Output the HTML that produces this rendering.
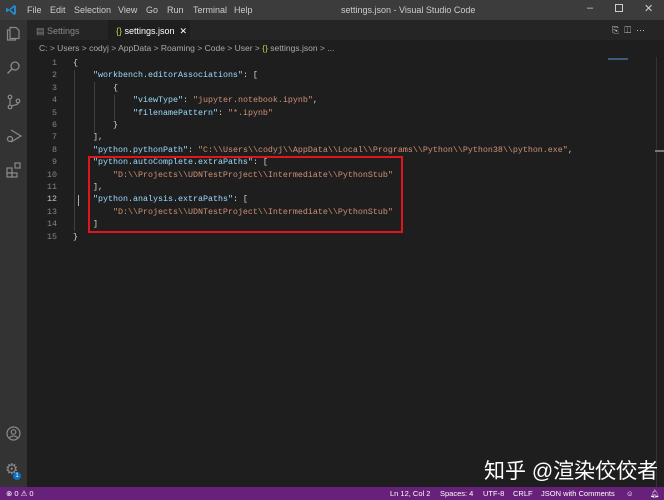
<!DOCTYPE html>
<html><head><meta charset="utf-8"><style>
*{margin:0;padding:0;box-sizing:border-box}
body{width:664px;height:500px;background:#1e1e1e;overflow:hidden;position:relative;font-family:"Liberation Sans",sans-serif;color:#ccc}
.abs{position:absolute}
#title{left:0;top:0;width:664px;height:20px;background:#3c3c3c;font-size:9px;color:#ccc}
#title span{position:absolute;top:5px}
#act{left:0;top:20px;width:27px;height:467px;background:#333}
#tabs{left:27px;top:20px;width:637px;height:20px;background:#252526}
#bc{left:27px;top:40px;width:637px;height:17px;background:#1e1e1e;font-size:8.5px;color:#a9a9a9}
#status{left:0;top:487px;width:664px;height:13px;background:#68217a;color:#fff;font-size:7.5px}
#status span{position:absolute;top:2px}
.code{font-family:"Liberation Mono",monospace;font-size:8.33px;line-height:12.4px;white-space:pre}
.k{color:#9cdcfe}.s{color:#ce9178}.p{color:#d4d4d4}
#nums{left:27px;top:57px;width:30px;text-align:right;color:#858585}
#lines{left:73px;top:57px}
.g{position:absolute;width:1px;background:#404040}
</style></head><body>
<div class="abs" id="title">
<svg class="abs" style="left:5px;top:4px" width="12" height="12" viewBox="0 0 12 12"><path d="M9 1L4 5.5 1.8 3.8 1 4.2v3.6l.8.4L4 6.5 9 11l2-1V2z" fill="#2489ca"/><path d="M9 3.5L5.5 6 9 8.5z" fill="#3c3c3c"/></svg>
<span style="left:27px">File</span><span style="left:50px">Edit</span><span style="left:74px">Selection</span><span style="left:118px">View</span><span style="left:146px">Go</span><span style="left:167px">Run</span><span style="left:193px">Terminal</span><span style="left:234px">Help</span>
<span style="left:341px">settings.json - Visual Studio Code</span>
<span style="left:587px;top:2px;font-size:11px">–</span>
<span style="left:615px;top:4px;width:8px;height:8px;border:1px solid #ccc"></span>
<span style="left:644px;top:2px;font-size:11px">✕</span>
</div>
<div class="abs" id="act">
<svg class="abs" style="left:6px;top:6px" width="15" height="15" viewBox="0 0 15 15" fill="none" stroke="#8a8a8a" stroke-width="1.2"><path d="M4 4V1.5h6l3 3v8H4z"/><path d="M4 4H1.5v10h8v-1.5"/></svg>
<svg class="abs" style="left:6px;top:40px" width="15" height="15" viewBox="0 0 15 15" fill="none" stroke="#8a8a8a" stroke-width="1.3"><circle cx="9" cy="6" r="4"/><path d="M6 9l-4.5 4.5"/></svg>
<svg class="abs" style="left:7px;top:74px" width="14" height="16" viewBox="0 0 14 16" fill="none" stroke="#8a8a8a" stroke-width="1.2"><circle cx="3" cy="3" r="1.8"/><circle cx="3" cy="13" r="1.8"/><circle cx="11" cy="7" r="1.8"/><path d="M3 5v6M11 9c0 2-4 2-7 3"/></svg>
<svg class="abs" style="left:6px;top:108px" width="16" height="16" viewBox="0 0 16 16" fill="none" stroke="#8a8a8a" stroke-width="1.2"><path d="M5 2l10 6-10 6"/><circle cx="4" cy="11" r="2.5"/></svg>
<svg class="abs" style="left:6px;top:142px" width="16" height="16" viewBox="0 0 16 16" fill="none" stroke="#8a8a8a" stroke-width="1.2"><rect x="1" y="6" width="5" height="5"/><rect x="1" y="11" width="5" height="4"/><rect x="6" y="11" width="5" height="4"/><rect x="9" y="1" width="5" height="5"/></svg>
<svg class="abs" style="left:6px;top:406px" width="15" height="15" viewBox="0 0 15 15" fill="none" stroke="#8a8a8a" stroke-width="1.2"><circle cx="7.5" cy="7.5" r="6.5"/><circle cx="7.5" cy="6" r="2.3"/><path d="M3.3 12.3c1.5-3 7-3 8.4 0"/></svg>
<div class="abs" style="left:5px;top:440px;font-size:15px;color:#8a8a8a">⚙</div>
<div class="abs" style="left:13px;top:452px;width:8px;height:8px;border-radius:4px;background:#0e70c0;color:#fff;font-size:6px;text-align:center;line-height:8px">1</div>
</div>
<div class="abs" id="tabs">
<div class="abs" style="left:9px;top:6px;font-size:9px;color:#8a8a8a">▤ Settings</div>
<div class="abs" style="left:81px;top:0;width:82px;height:20px;background:#1e1e1e;font-size:9px;color:#fff"><span style="position:absolute;left:8px;top:6px"><span style="color:#cbcb41">{}</span> settings.json&nbsp; ✕</span></div>
<div class="abs" style="left:585px;top:5px;font-size:9px;color:#ccc">⎘&nbsp; ◫&nbsp; ···</div>
</div>
<div class="abs" id="bc"><span style="position:absolute;left:12px;top:3px">C: &gt; Users &gt; codyj &gt; AppData &gt; Roaming &gt; Code &gt; User &gt; <span style="color:#cbcb41">{}</span> settings.json &gt; ...</span></div>
<div class="abs code" id="nums">1
2
3
4
5
6
7
8
9
10
11
<span style="color:#c6c6c6">12</span>
13
14
15</div>
<div class="g" style="left:74px;top:70px;height:161px"></div>
<div class="g" style="left:94px;top:82px;height:50px"></div>
<div class="g" style="left:114px;top:95px;height:25px"></div>
<div class="abs" style="left:78px;top:195px;width:1px;height:11px;background:#aaa"></div>
<div class="abs code p" id="lines">{
    <span class="k">"workbench.editorAssociations"</span>: [
        {
            <span class="k">"viewType"</span>: <span class="s">"jupyter.notebook.ipynb"</span>,
            <span class="k">"filenamePattern"</span>: <span class="s">"*.ipynb"</span>
        }
    ],
    <span class="k">"python.pythonPath"</span>: <span class="s">"C:\\Users\\codyj\\AppData\\Local\\Programs\\Python\\Python38\\python.exe"</span>,
    <span class="k">"python.autoComplete.extraPaths"</span>: [
        <span class="s">"D:\\Projects\\UDNTestProject\\Intermediate\\PythonStub"</span>
    ],
    <span class="k">"python.analysis.extraPaths"</span>: [
        <span class="s">"D:\\Projects\\UDNTestProject\\Intermediate\\PythonStub"</span>
    ]
}</div>
<div class="abs" style="left:88px;top:156px;width:315px;height:77px;border:2px solid #e0161d"></div>
<div class="abs" style="left:608px;top:58px;width:20px;height:2px;background:#3c5a7a"></div>
<div class="abs" style="left:656px;top:57px;width:1px;height:430px;background:#333"></div>
<div class="abs" style="left:655px;top:150px;width:9px;height:2px;background:#777"></div>
<div class="abs" style="left:484px;top:455px;font-family:'Liberation Sans','Noto Sans CJK SC',sans-serif;font-size:21px;color:#fff">知乎 @渲染佼佼者</div>
<div class="abs" id="status">
<span style="left:6px">⊗ 0 ⚠ 0</span>
<span style="left:390px">Ln 12, Col 2</span><span style="left:440px">Spaces: 4</span><span style="left:483px">UTF-8</span><span style="left:513px">CRLF</span><span style="left:541px">JSON with Comments</span><span style="left:626px">☺</span><span style="left:650px">🔔︎</span>
</div>
</body></html>
